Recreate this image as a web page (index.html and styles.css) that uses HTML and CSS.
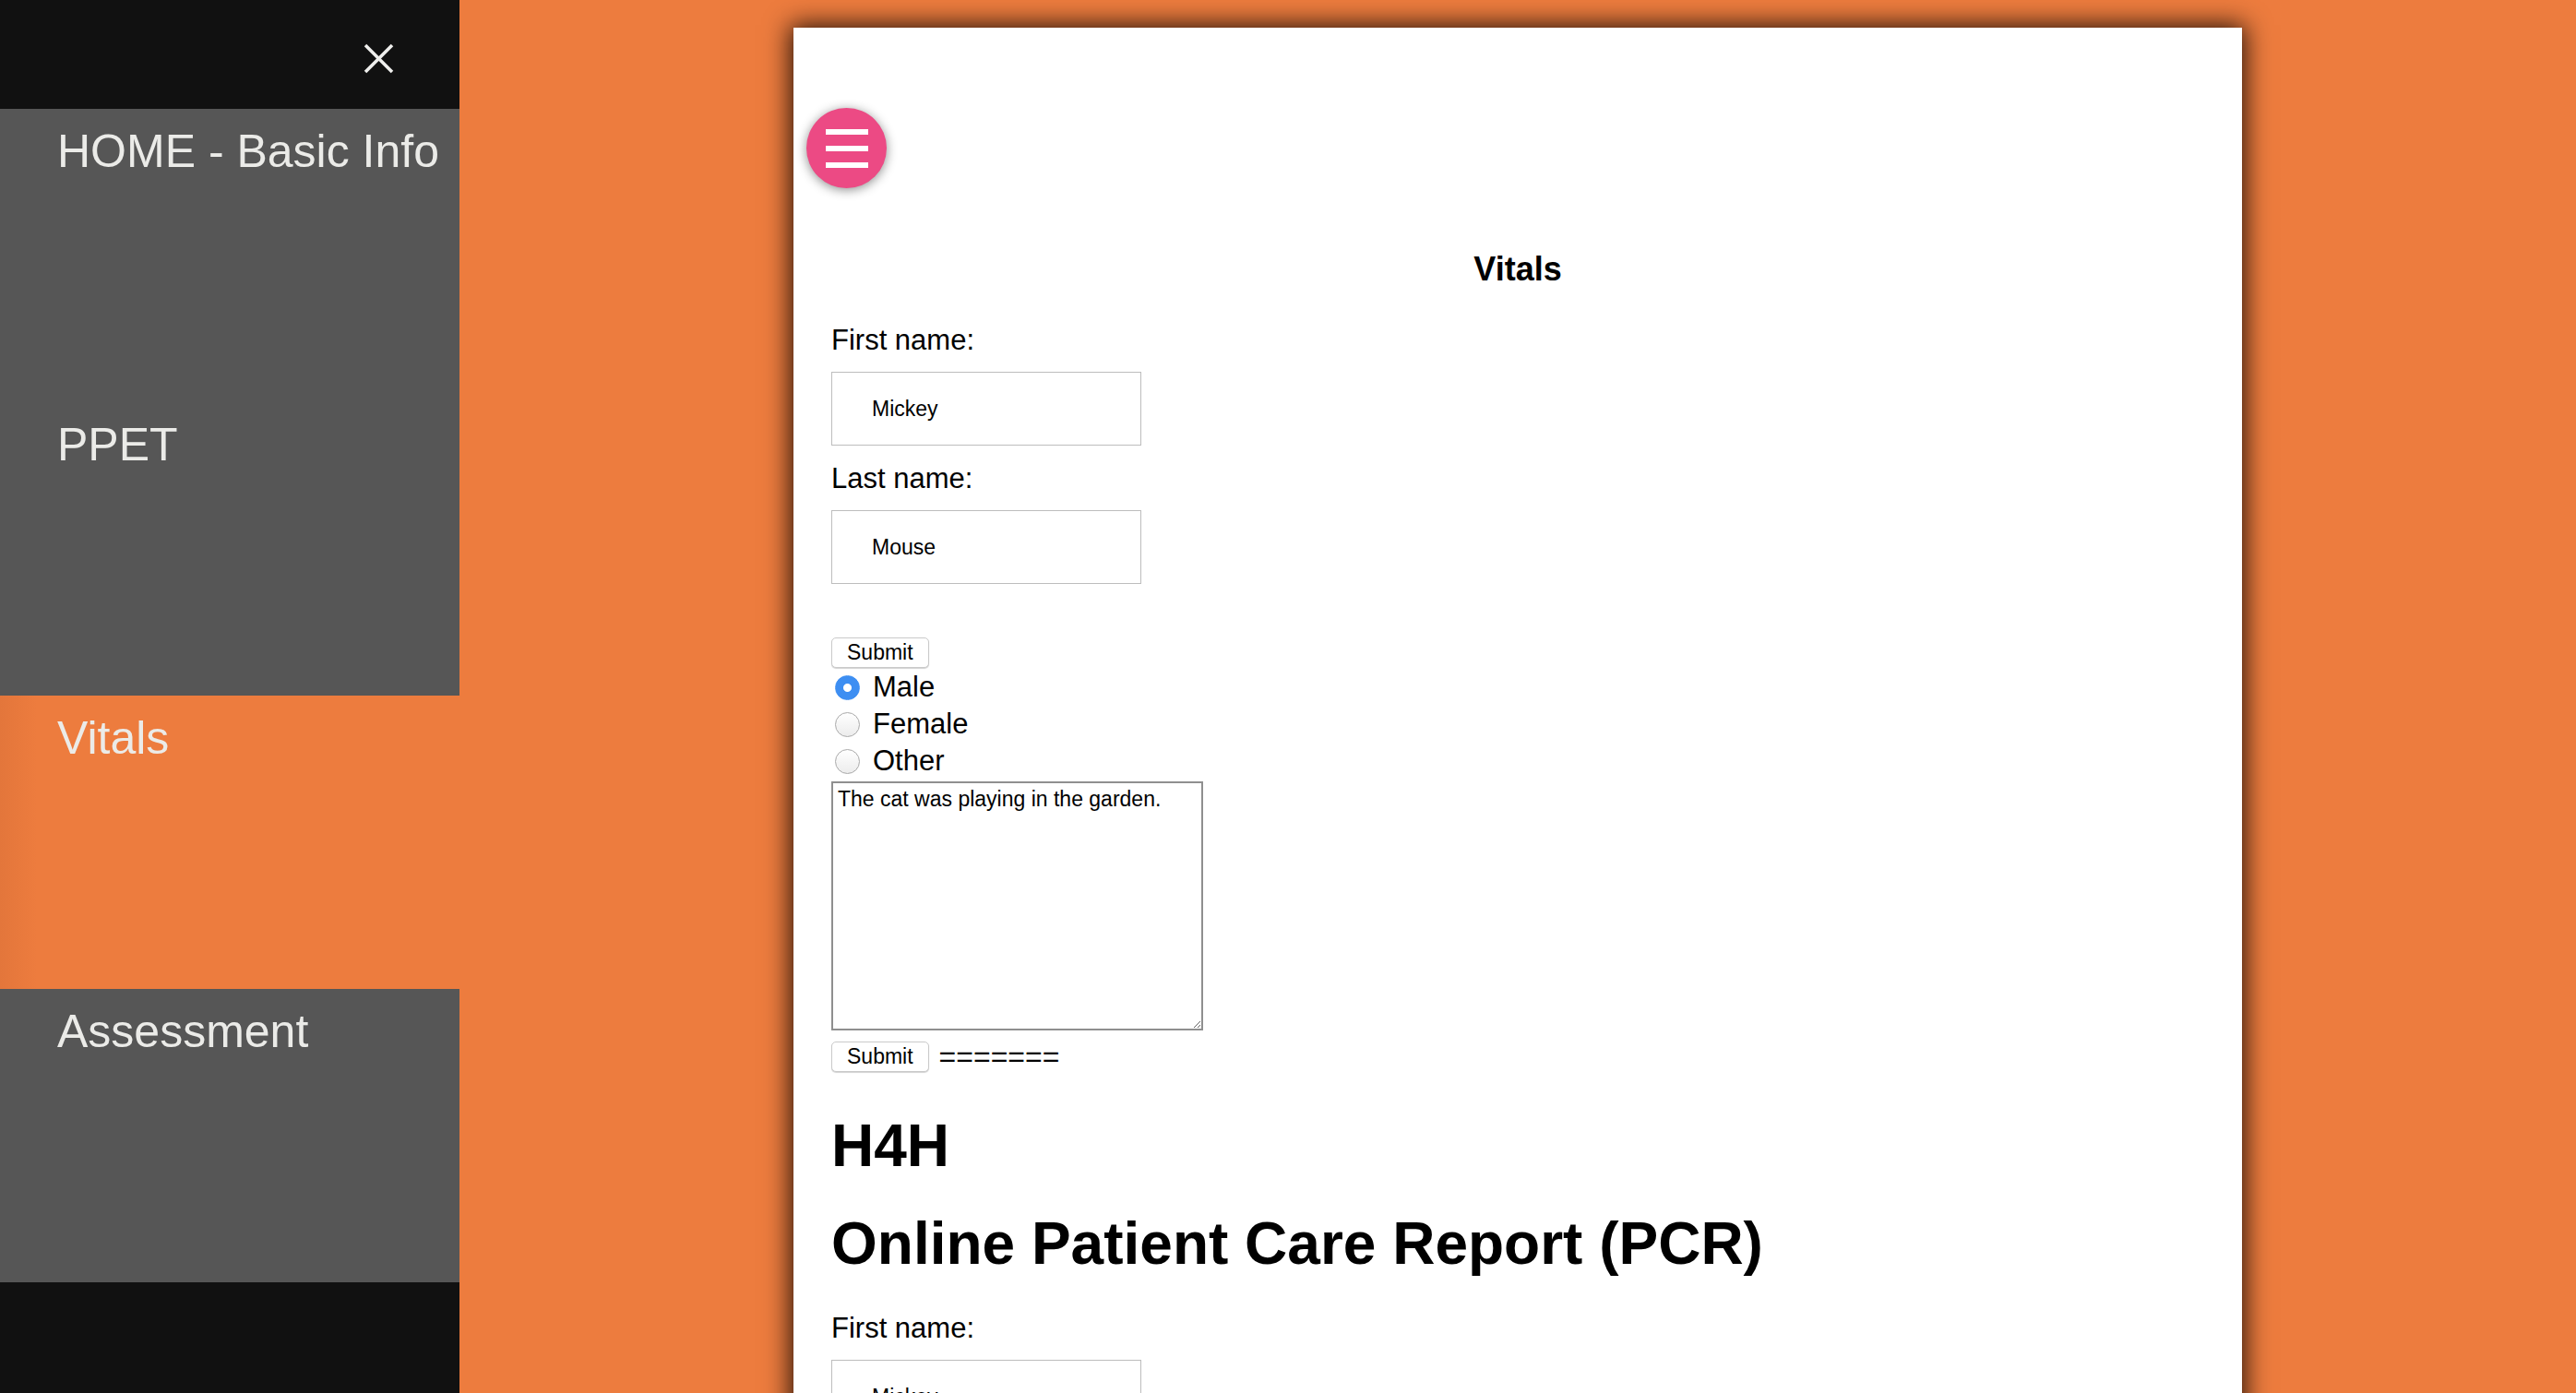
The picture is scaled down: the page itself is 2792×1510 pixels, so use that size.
FILE: index.html
```html
<!DOCTYPE html>
<html lang="en">
  <head>
    <meta charset="utf-8">
    <title>H4H - Online Patient Care Report</title>
    <link rel="stylesheet" href="styles.css">
  </head>
  <body>
    <nav id="side-nav">
      <div id="side-nav-top">
        <a href="#" class="close-btn" aria-label="Close menu">
          <svg width="33" height="33" viewBox="0 0 33 33">
            <line x1="2" y1="2" x2="31" y2="31" />
            <line x1="31" y1="2" x2="2" y2="31" />
          </svg>
        </a>
      </div>
      <a href="#" class="nav-item">HOME - Basic Info</a>
      <a href="#" class="nav-item">PPET</a>
      <a href="#" class="nav-item active">Vitals</a>
      <a href="#" class="nav-item">Assessment</a>
    </nav>
    <main id="page-main">
      <div id="card">
        <button class="menu-btn" aria-label="Open menu">
          <span></span>
          <span></span>
          <span></span>
        </button>
        <div class="content">
          <h3 class="section-title">Vitals</h3>
          <form>
            <label class="field-label" for="fname">First name:</label>
            <input class="text-field" type="text" id="fname" value="Mickey">
            <label class="field-label label-next" for="lname">Last name:</label>
            <input class="text-field" type="text" id="lname" value="Mouse">
            <button class="submit-btn submit-first" type="button">Submit</button>
            <label class="radio-row"><input type="radio" name="gender" checked> Male</label>
            <label class="radio-row"><input type="radio" name="gender"> Female</label>
            <label class="radio-row"><input type="radio" name="gender"> Other</label>
            <textarea id="notes">The cat was playing in the garden.</textarea>
            <div class="form-actions">
              <button class="submit-btn" type="button">Submit</button>
              <span class="divider">=======</span>
            </div>
          </form>
          <h1 class="page-title first">H4H</h1>
          <h1 class="page-title">Online Patient Care Report (PCR)</h1>
          <form>
            <label class="field-label label-pcr" for="fname2">First name:</label>
            <input class="text-field" type="text" id="fname2" value="Mickey">
          </form>
        </div>
      </div>
    </main>
  </body>
</html>
```

FILE: styles.css
```css
:root {
  --orange: #ed7c3e;
  --orange-dark: #e3763b;
  --grey: #565656;
  --black: #111111;
  --nav-text: #ebebe8;
  --pink: #ec4a84;
  --blue: #3d8ef2;
}
html,
body {
  height: 100%;
}
body {
  display: flex;
  margin: 0;
  overflow: hidden;
  font-family: "Liberation Sans", Arial, Helvetica, sans-serif;
  color: #000;
  background-color: var(--orange);
}
#side-nav {
  display: flex;
  flex-direction: column;
  flex: 0 0 498px;
  height: 100%;
  background-color: var(--black);
}
#side-nav-top {
  display: flex;
  justify-content: flex-end;
  height: 118px;
  padding: 47px 71px 0 0;
  box-sizing: border-box;
}
.close-btn {
  display: block;
  width: 33px;
  height: 33px;
}
.close-btn svg {
  display: block;
  stroke: #efefed;
  stroke-width: 3.6;
}
.nav-item {
  display: block;
  height: 318px;
  padding: 17px 0 0 62px;
  box-sizing: border-box;
  font-size: 50px;
  line-height: 58px;
  color: var(--nav-text);
  text-decoration: none;
  white-space: nowrap;
  background-color: var(--grey);
}
.nav-item.active {
  background: linear-gradient(90deg, var(--orange-dark) 0, var(--orange) 40px);
}
#page-main {
  flex: 1;
  min-width: 0;
}
#card {
  display: flow-root;
  width: 1570px;
  min-height: 1700px;
  margin: 30px 0 0 362px;
  background-color: #fff;
  box-shadow: 0 0 26px 3px rgba(0, 0, 0, 0.85);
}
.menu-btn {
  display: flex;
  flex-direction: column;
  align-items: center;
  justify-content: center;
  gap: 12px;
  width: 87px;
  height: 87px;
  margin: 87px 0 0 14px;
  padding: 0;
  border: none;
  border-radius: 50%;
  background-color: var(--pink);
  box-shadow: 0 2px 12px rgba(0, 0, 0, 0.45);
}
.menu-btn span {
  display: block;
  width: 46px;
  height: 6px;
  background-color: #fff;
}
.content {
  padding: 0 41px;
}
.section-title {
  margin: 66px 0 0;
  font-size: 36px;
  line-height: 44px;
  text-align: center;
}
.field-label {
  display: block;
  margin-top: 37px;
  font-size: 31px;
  line-height: 36px;
}
.label-next {
  margin-top: 18px;
}
.label-pcr {
  margin-top: 38px;
}
.text-field {
  display: block;
  width: 336px;
  height: 80px;
  margin: 16px 0 0;
  padding: 0 0 0 43px;
  box-sizing: border-box;
  font-family: inherit;
  font-size: 23px;
  color: #000;
  border: 1px solid #bdbdbd;
  border-radius: 0;
  outline: none;
}
.submit-btn {
  height: 33px;
  padding: 0 16px;
  font-family: inherit;
  font-size: 23px;
  line-height: 31px;
  color: #000;
  background-color: #fff;
  border: 1px solid #cacaca;
  border-radius: 5px;
  box-shadow: 0 1px 1px rgba(0, 0, 0, 0.18);
}
.submit-first {
  display: block;
  margin-top: 58px;
}
.radio-row {
  display: flex;
  align-items: center;
  gap: 14px;
  height: 40px;
  font-size: 31px;
}
.submit-first + .radio-row {
  margin-top: 1px;
}
.radio-row input {
  appearance: none;
  -webkit-appearance: none;
  width: 27px;
  height: 27px;
  margin: 0 0 0 4px;
  border: 1px solid #a9a9a9;
  border-radius: 50%;
  background: linear-gradient(#ffffff, #ececec);
  box-sizing: border-box;
}
.radio-row input:checked {
  border-color: var(--blue);
  background: radial-gradient(circle, #fff 0 4px, var(--blue) 5px);
}
#notes {
  display: block;
  width: 403px;
  height: 270px;
  margin-top: 2px;
  padding: 3px 5px;
  box-sizing: border-box;
  font-family: inherit;
  font-size: 23px;
  line-height: 28px;
  color: #000;
  border: 2px solid #8f8f8f;
  resize: both;
}
.form-actions {
  display: flex;
  align-items: center;
  gap: 11px;
  height: 34px;
  margin-top: 11px;
}
.divider {
  font-size: 32px;
}
.page-title {
  margin: 34px 0 0;
  font-size: 64px;
  line-height: 72px;
}
.page-title.first {
  margin-top: 44px;
}
```
